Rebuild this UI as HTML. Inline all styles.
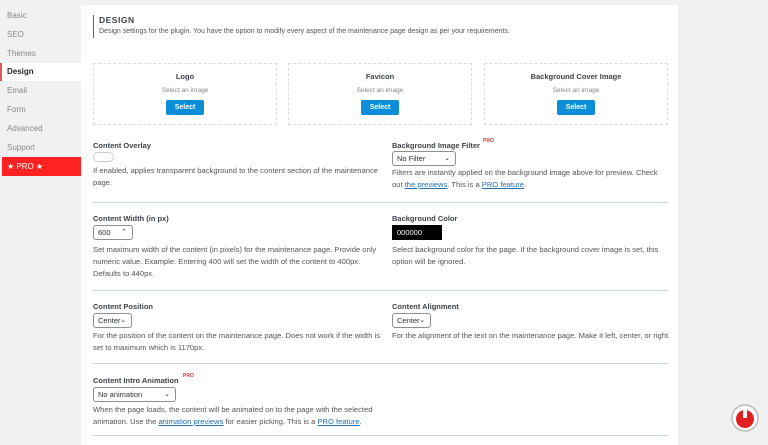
<!DOCTYPE html>
<html><head><style>
*{margin:0;padding:0;box-sizing:border-box}
body{width:768px;height:438px;background:#f1f1f1;font-family:"Liberation Sans",sans-serif;position:relative;overflow:hidden;color:#3c434a}
.abs{position:absolute}
.nav{position:absolute;left:7px;font-size:8px;color:#888}
.panel{position:absolute;left:81px;top:5px;width:597px;height:440px;background:#fff}
.lbl{position:absolute;font-size:7.5px;font-weight:bold;color:#3c434a;line-height:9px;white-space:nowrap}
.txt{position:absolute;font-size:7.6px;color:#555;line-height:12px}
.sep{position:absolute;left:93px;width:575px;height:1px;background:#c8d7e1}
.box{position:absolute;top:63px;width:184px;height:62px;border:1px dashed #ddd;text-align:center}
.box b{display:block;font-size:7.5px;margin-top:8px;color:#3c434a}
.box span{display:block;font-size:6.5px;color:#888;margin-top:6px}
.btn{display:inline-block;margin-top:6px;background:#0a8ed8;color:#fff;font-size:7px;font-weight:bold;padding:4px 9px;border-radius:2px}
.sel{position:absolute;border:1px solid #8c8f94;border-radius:3px;font-size:7.5px;padding:3px 4px;background:#fff;color:#2c3338;height:15px;line-height:8px}
.sel i{position:absolute;right:5px;top:3px;font-style:normal;font-size:7px}
a{color:#2271b1}
.sup{position:absolute;color:#d63638;font-size:5px;font-weight:bold}
</style></head><body>
<div class="nav" style="top:11px">Basic</div>
<div class="nav" style="top:30px">SEO</div>
<div class="nav" style="top:49px">Themes</div>
<div class="abs" style="left:0;top:63px;width:81px;height:18px;background:#fff;border-left:2px solid #e05a5a"></div>
<div class="nav" style="top:67px;color:#1d2327;font-weight:bold">Design</div>
<div class="nav" style="top:86px">Email</div>
<div class="nav" style="top:105px">Form</div>
<div class="nav" style="top:124px">Advanced</div>
<div class="nav" style="top:143px">Support</div>
<div class="abs" style="left:2px;top:157px;width:79px;height:19px;background:#f22;color:#fff;font-size:8px;padding:5px 5px">★ PRO ★</div>
<div class="panel"></div>
<div class="abs" style="left:93px;top:15px;width:1px;height:23px;background:#e03030"></div>
<div class="abs" style="left:99px;top:15px;font-size:8.5px;font-weight:bold;letter-spacing:.5px;color:#3c434a">DESIGN</div>
<div class="abs" style="left:99px;top:28px;font-size:7px;color:#555;white-space:nowrap">Design settings for the plugin. You have the option to modify every aspect of the maintenance page design as per your requirements.</div>
<div class="box" style="left:93px"><b>Logo</b><span>Select an image</span><div class="btn">Select</div></div>
<div class="box" style="left:288px"><b>Favicon</b><span>Select an image</span><div class="btn">Select</div></div>
<div class="box" style="left:484px"><b>Background Cover Image</b><span>Select an image</span><div class="btn">Select</div></div>

<div class="lbl" style="left:93px;top:141px">Content Overlay</div>
<div class="abs" style="left:93px;top:152px;width:21px;height:10px;border:1px solid #ccc;border-radius:6px"></div>
<div class="txt" style="left:93px;top:165px;width:292px">If enabled, applies transparent background to the content section of the maintenance page.</div>
<div class="lbl" style="left:392px;top:141px">Background Image Filter</div>
<div class="sup" style="left:483px;top:138px">PRO</div>
<div class="sel" style="left:392px;top:151px;width:64px">No Filter<i>⌄</i></div>
<div class="txt" style="left:392px;top:167px;width:276px">Filters are instantly applied on the background image above for preview. Check out <a href="#">the previews</a>. This is a <a href="#">PRO feature</a>.</div>
<div class="sep" style="top:202px"></div>

<div class="lbl" style="left:93px;top:214px">Content Width (in px)</div>
<div class="sel" style="left:93px;top:225px;width:40px">600<i>⌃</i></div>
<div class="txt" style="left:93px;top:244px;width:292px">Set maximum width of the content (in pixels) for the maintenance page. Provide only numeric value. Example: Entering 400 will set the width of the content to 400px. Defaults to 440px.</div>
<div class="lbl" style="left:392px;top:214px">Background Color</div>
<div class="abs" style="left:392px;top:225px;width:50px;height:15px;background:#000;color:#fff;font-size:7.5px;padding:4px 5px;line-height:8px">000000</div>
<div class="txt" style="left:392px;top:244px;width:270px">Select background color for the page. If the background cover image is set, this option will be ignored.</div>
<div class="sep" style="top:290px"></div>

<div class="lbl" style="left:93px;top:302px">Content Position</div>
<div class="sel" style="left:93px;top:313px;width:39px">Center<i>⌄</i></div>
<div class="txt" style="left:93px;top:330px;width:292px">For the position of the content on the maintenance page. Does not work if the width is set to maximum which is 1170px.</div>
<div class="lbl" style="left:392px;top:302px">Content Alignment</div>
<div class="sel" style="left:392px;top:313px;width:39px">Center<i>⌄</i></div>
<div class="txt" style="left:392px;top:330px;width:290px">For the alignment of the text on the maintenance page. Make it left, center, or right.</div>
<div class="sep" style="top:363px"></div>

<div class="lbl" style="left:93px;top:376px">Content Intro Animation</div>
<div class="sup" style="left:183px;top:373px">PRO</div>
<div class="sel" style="left:93px;top:387px;width:83px">No animation<i>⌄</i></div>
<div class="txt" style="left:93px;top:404px;width:292px">When the page loads, the content will be animated on to the page with the selected animation. Use the <a href="#">animation previews</a> for easier picking. This is a <a href="#">PRO feature</a>.</div>
<div class="sep" style="top:435px"></div>

<svg class="abs" style="left:730px;top:403px" width="30" height="30" viewBox="0 0 30 30">
<circle cx="15" cy="15" r="13" fill="#fff" stroke="#bbb" stroke-width="1.5"/>
<circle cx="15" cy="16" r="9" fill="#e02020"/>
<rect x="13" y="6" width="4" height="9" rx="1" fill="#fff"/>
</svg>
</body></html>
